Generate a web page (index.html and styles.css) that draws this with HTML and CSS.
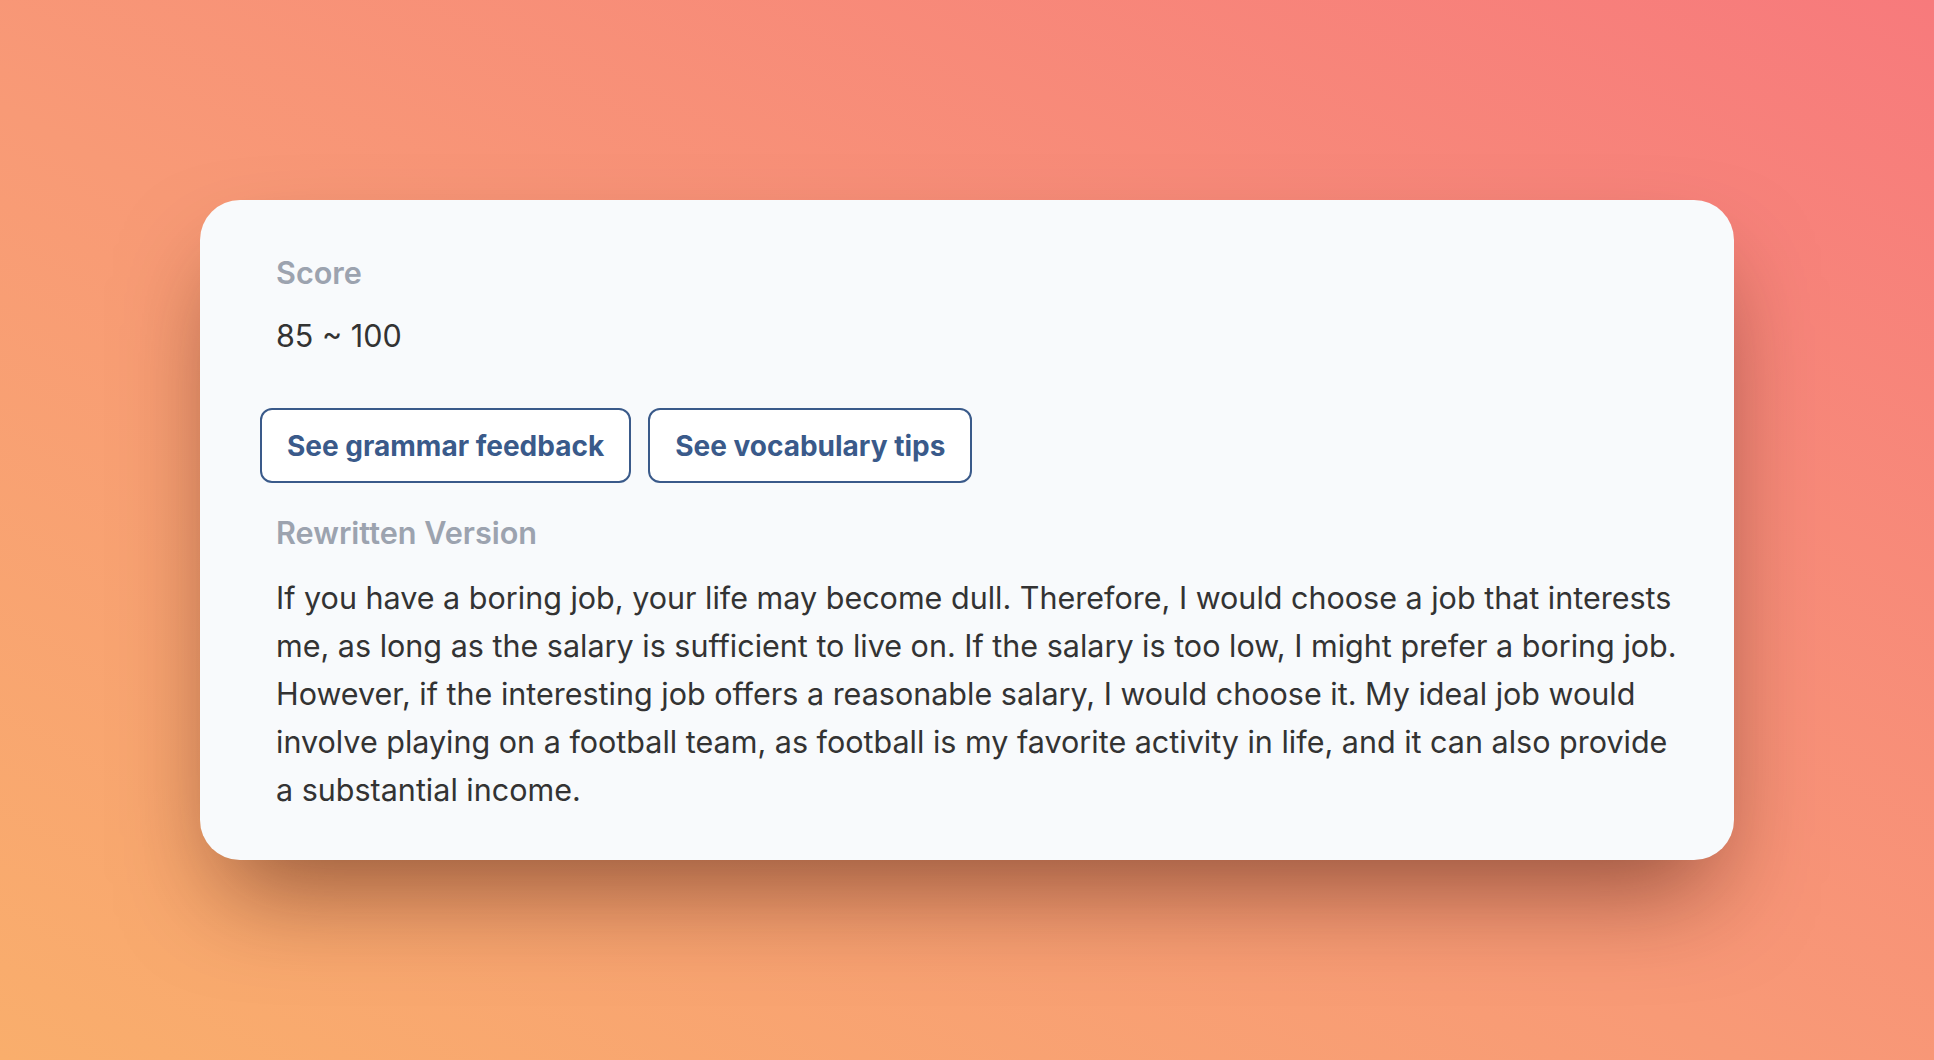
FILE: index.html
```html
<!DOCTYPE html>
<html lang="en">
<head>
<meta charset="utf-8">
<title>Essay feedback</title>
<link rel="stylesheet" href="styles.css">
</head>
<body>
<main class="stage">
  <section class="card">
    <div class="field">
      <h2 class="label">Score</h2>
      <p class="value">85 ~ 100</p>
    </div>
    <div class="actions">
      <button class="btn" type="button">See grammar feedback</button>
      <button class="btn" type="button">See vocabulary tips</button>
    </div>
    <div class="field rewritten">
      <h2 class="label">Rewritten Version</h2>
      <p class="body">If you have a boring job, your life may become dull. Therefore, I would choose a job that interests me, as long as the salary is sufficient to live on. If the salary is too low, I might prefer a boring job. However, if the interesting job offers a reasonable salary, I would choose it. My ideal job would involve playing on a football team, as football is my favorite activity in life, and it can also provide a substantial income.</p>
    </div>
  </section>
</main>
</body>
</html>
```
FILE: styles.css
```css
* { box-sizing: border-box; }
html, body { margin: 0; padding: 0; }
body {
  width: 1934px;
  height: 1060px;
  overflow: hidden;
  font-family: Inter, "Noto Sans", sans-serif;
  background: linear-gradient(to top right, #f9ae6c 0%, #f89a76 45%, #f77a7c 100%);
}
.stage {
  padding: 200px 200px 0 200px;
}
.card {
  width: 1534px;
  height: 660px;
  background: #f8fafc;
  border-radius: 40px;
  box-shadow: 0 50px 100px -24px rgba(60, 20, 10, 0.55);
  padding: 49px 40px 0 60px;
  display: flex;
  flex-direction: column;
}
.field {
  padding: 0 16px;
}
.label {
  margin: 0;
  font-size: 30.6px;
  line-height: 48px;
  font-weight: 600;
  color: #9ca3af;
}
.value {
  margin: 15px 0 0 0;
  font-size: 30.5px;
  line-height: 48px;
  color: #333333;
}
.actions {
  display: flex;
  gap: 17px;
  margin-top: 48px;
}
.btn {
  height: 75px;
  padding: 0 25px;
  border: 2px solid #3a5a8a;
  border-radius: 12px;
  background: #ffffff;
  color: #3a5a8a;
  font-family: Inter, "Noto Sans", sans-serif;
  font-size: 28px;
  font-weight: 700;
}
.rewritten {
  margin-top: 26px;
}
.body {
  margin: 17px 0 0 0;
  font-size: 30.5px;
  line-height: 48px;
  color: #333333;
}
```
